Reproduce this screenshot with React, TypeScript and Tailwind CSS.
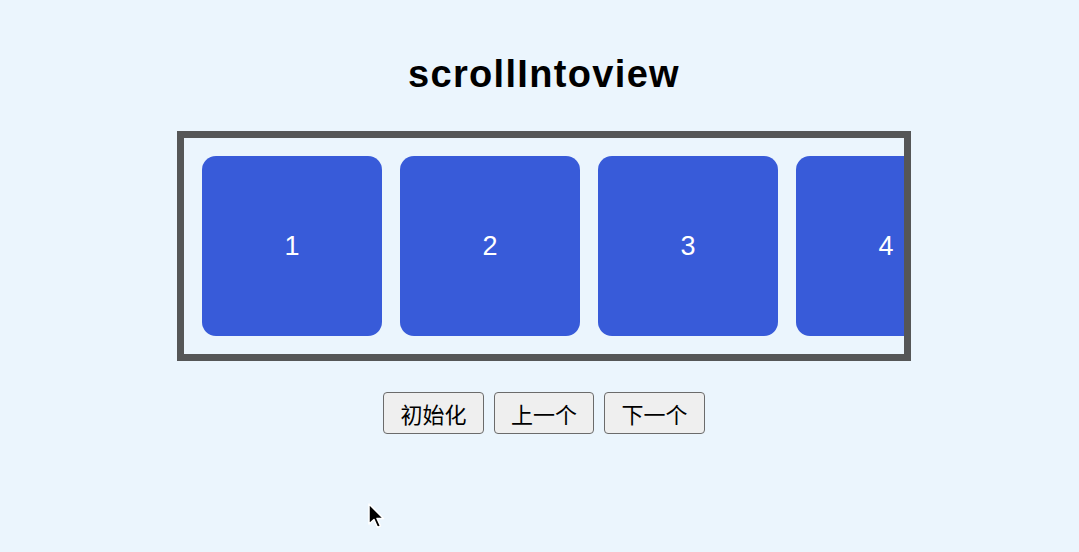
import { useRef } from 'react';

const items = [1, 2, 3, 4];

export default function App() {
    const listRef = useRef<HTMLDivElement>(null);
    const current = useRef(0);

    const go = (i: number) => {
        const list = listRef.current;
        if (!list) return;
        const next = Math.max(0, Math.min(items.length - 1, i));
        current.current = next;
        const el = list.children[next] as HTMLElement | undefined;
        el?.scrollIntoView({ behavior: 'smooth', block: 'nearest', inline: 'start' });
    };

    return (
        <div className="relative min-h-[552px] w-full bg-[#ebf5fd] pl-[9px] font-['Liberation_Sans','Noto_Sans_CJK_SC',sans-serif]">
            <div className="flex flex-col items-center pt-[54px]">
                <h1 className="text-[38px] font-bold leading-[40px] tracking-[0.035em] text-black">
                    scrollIntoview
                </h1>

                <div className="mt-[37px] w-[734px] border-[7px] border-[#555657]">
                    <div ref={listRef} className="flex gap-[18px] overflow-hidden p-[18px]">
                        {items.map((n) => (
                            <div
                                key={n}
                                className="flex h-[180px] w-[180px] shrink-0 items-center justify-center rounded-[14px] bg-[#385bd9] text-[27px] text-white"
                            >
                                {n}
                            </div>
                        ))}
                    </div>
                </div>

                <div className="mt-[31px] flex gap-[10px] font-['Noto_Sans_CJK_SC',sans-serif] text-[22px] text-black">
                    <button
                        onClick={() => go(0)}
                        className="h-[42px] w-[101px] rounded-[4px] border border-[#6b6b6b] bg-[#efefef] leading-none"
                    >
                        初始化
                    </button>
                    <button
                        onClick={() => go(current.current - 1)}
                        className="h-[42px] w-[100px] rounded-[4px] border border-[#6b6b6b] bg-[#efefef] leading-none"
                    >
                        上一个
                    </button>
                    <button
                        onClick={() => go(current.current + 1)}
                        className="h-[42px] w-[101px] rounded-[4px] border border-[#6b6b6b] bg-[#efefef] leading-none"
                    >
                        下一个
                    </button>
                </div>
            </div>

            {/* mouse pointer caught in the capture */}
            <svg className="absolute left-[368px] top-[503px]" width="18" height="28" viewBox="0 0 18 28">
                <path d="M1 1 L1 21 L6 16.5 L9.5 24.5 L12.5 23 L9 15.5 L15.5 15.5 Z" fill="#000" stroke="#fff" strokeWidth="1.5" strokeLinejoin="round" />
            </svg>
        </div>
    );
}
